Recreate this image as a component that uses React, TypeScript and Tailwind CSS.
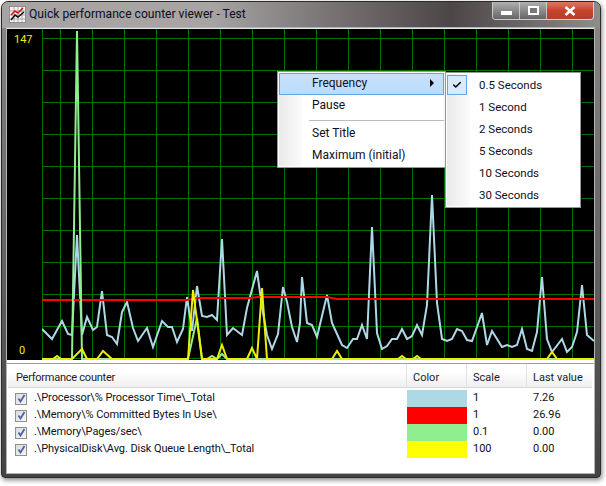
import { Check } from "lucide-react";

const gridX = [42, 60, 92, 124, 156, 188, 220, 252, 284, 316, 348, 380, 412, 444, 476, 508, 540, 572];
const gridY = [38, 70, 102, 134, 166, 198, 230, 262, 294, 326, 358];

const bluePts =
  "42,329 52,339 62,321 68,334 72,335 77,235 82,335 87,317 93,330 97,327 102,291 107,335 112,337 117,344 122,312 127,302 133,328 138,341 147,328 153,347 162,321 168,327 172,327 177,342 183,329 187,297 192,331 197,286 202,316 207,317 212,315 217,320 222,239 227,335 233,328 242,335 247,308 257,271 262,307 267,335 272,349 278,334 283,287 287,302 292,327 297,342 300,323 302,277 307,323 312,325 317,337 327,295 332,323 342,345 347,348 353,339 357,339 362,325 367,339 372,227 377,333 382,349 387,346 392,339 397,339 402,329 407,339 412,336 417,325 422,335 427,305 432,195 437,303 442,339 447,341 452,339 457,329 462,331 467,340 472,341 482,313 487,345 492,331 502,347 507,345 512,347 517,345 522,329 527,349 532,351 537,332 542,277 547,339 552,352 562,339 567,352 572,347 577,332 582,285 587,335 594,341";
const redPts = "42,300 187,300 197,298 250,298 258,297 327,297 337,299 594,299";
const greenPts = "42,359 72,359 77,31 82,359 188,359 197,318 202,359 207,359 212,356 217,359 222,354 227,359 594,359";
const yellowPts =
  "42,359 53,359 57,356 61,359 72,359 82,349 87,359 97,359 103,351 112,359 178,359 188,359 193,290 202,359 217,359 222,345 227,359 247,359 252,348 257,359 262,288 267,359 332,359 337,351 342,359 398,359 402,356 406,359 413,359 417,356 421,359 547,359 552,352 557,359 594,359";

const counters = [
  { name: ".\\Processor\\% Processor Time\\_Total", color: "bg-[#add8e6]", scale: "1", last: "7.26" },
  { name: ".\\Memory\\% Committed Bytes In Use\\", color: "bg-[#ff0000]", scale: "1", last: "26.96" },
  { name: ".\\Memory\\Pages/sec\\", color: "bg-[#90ee90]", scale: "0.1", last: "0.00" },
  { name: ".\\PhysicalDisk\\Avg. Disk Queue Length\\_Total", color: "bg-[#ffff00]", scale: "100", last: "0.00" },
];

const freqs = ["1 Second", "2 Seconds", "5 Seconds", "10 Seconds", "30 Seconds"];

const AppIcon = () => (
  <svg width="17" height="17" viewBox="0 0 17 17" className="shrink-0">
    <rect x="0.5" y="0.5" width="16" height="16" fill="#f4f4f4" stroke="#555" strokeDasharray="1 1" />
    <path d="M1 5H16M1 9H16M1 13H16M5 1V16M9 1V16M13 1V16" stroke="#aaa" strokeWidth="1" />
    <path d="M2 9L6 5L9 7L14 2" stroke="#e01010" strokeWidth="1.6" fill="none" />
    <path d="M2 14L6 9L9 11L15 6" stroke="#111" strokeWidth="1.6" fill="none" />
  </svg>
);

const Chart = () => (
  <svg width="552" height="331" viewBox="42 29 552 331" className="block shrink-0">
    {gridX.map((x) => (
      <line key={x} x1={x + 0.5} y1="29" x2={x + 0.5} y2="359" stroke="#007400" />
    ))}
    {gridY.map((y) => (
      <line key={y} x1="42" y1={y + 0.5} x2="594" y2={y + 0.5} stroke="#007400" />
    ))}
    <polyline points={bluePts} fill="none" stroke="#add8e6" strokeWidth="2" />
    <polyline points={redPts} fill="none" stroke="#ff0000" strokeWidth="2" />
    <polyline points={greenPts} fill="none" stroke="#90ee90" strokeWidth="2" />
    <polyline points={yellowPts} fill="none" stroke="#eeee00" strokeWidth="2" />
  </svg>
);

const Checkbox = () => (
  <span className="w-[12px] h-[12px] shrink-0 border border-[#8e8f8f] bg-gradient-to-br from-[#dcdcdc] to-[#f6f6f6] flex items-center justify-center">
    <svg width="9" height="9" viewBox="0 0 9 9">
      <path d="M1.5 4.5L3.5 7.5L7.5 1" stroke="#4a62a8" strokeWidth="1.8" fill="none" />
    </svg>
  </span>
);

const Row = ({ c }: { c: (typeof counters)[number] }) => (
  <div className="flex h-[17px] items-center">
    <div className="w-[399px] flex items-center gap-[7px] pl-[7px] whitespace-nowrap tracking-[-0.08px]">
      <Checkbox />
      <span>{c.name}</span>
    </div>
    <div className={`w-[60px] h-full ${c.color}`} />
    <div className="w-[60px] pl-[6px]">{c.scale}</div>
    <div className="pl-[6px]">{c.last}</div>
  </div>
);

export default function App() {
  return (
    <div
      className="w-[606px] h-[486px] bg-white pt-[1px] pl-[1px] text-[12px] text-[#101020] overflow-hidden"
      style={{ fontFamily: "Roboto, sans-serif" }}
    >
      <div className="relative w-[600px] h-[477px] rounded-t-[7px] rounded-b-[4px] border border-[#2a2a2a] bg-gradient-to-b from-[#8c8888] to-[#434343] shadow-[1px_2px_5px_rgba(0,0,0,0.5)] px-[5px] pb-[4px] flex flex-col">
        {/* title bar */}
        <div className="h-[26px] shrink-0 -mx-[5px] px-[5px] rounded-t-[6px] bg-gradient-to-r from-[#a8a4a4] from-[35%] via-[#4c4646] via-[75%] to-[#908c8c] flex items-start justify-between">
          <div className="h-[22px] mt-[1px] flex items-center gap-[3px] pl-[2px] pr-[2px] text-[#0c0c20] text-[12.1px] whitespace-nowrap">
            <AppIcon />
            <span>Quick performance counter viewer - Test</span>
          </div>
          <div className="flex h-[18px] border border-t-0 border-[#e8e8e8]/80 rounded-b-[4px] overflow-hidden mr-[1px]">
            <div className="w-[27px] flex items-center justify-center border-r border-[#e0e0e0]/70 bg-gradient-to-b from-[#b0b0b0] via-[#8a8a8a] to-[#666]">
              <div className="w-[11px] h-[4px] bg-white mt-[4px]" />
            </div>
            <div className="w-[27px] flex items-center justify-center border-r border-[#e0e0e0]/70 bg-gradient-to-b from-[#b0b0b0] via-[#8a8a8a] to-[#666]">
              <div className="w-[11px] h-[9px] bg-[#777] border-2 border-white" />
            </div>
            <div className="w-[46px] flex items-center justify-center bg-gradient-to-b from-[#d87a60] via-[#c8432a] to-[#b0402c]">
              <svg width="12" height="10" viewBox="0 0 12 10">
                <path d="M1.5 1L10.5 9M10.5 1L1.5 9" stroke="#fff" strokeWidth="2.6" />
              </svg>
            </div>
          </div>
        </div>

        {/* client area */}
        <div className="relative flex-1 min-h-0 border-t border-[#e4e4e4] shadow-[0_0_0_1px_#b4b4b4] flex flex-col w-[587px] bg-white">
          <div className="flex bg-black h-[331px] shrink-0 text-[#eeee00] text-[11px]">
            <div className="w-[35px] flex flex-col justify-between shrink-0 pt-[3px] pb-[1px]">
              <span className="pl-[7px]">147</span>
              <span className="pl-[12px]">0</span>
            </div>
            <Chart />
          </div>

          <div className="flex-1 min-h-0 mt-[3px] border-t border-[#a0a0a0] pl-[1px] text-[11px]">
            <div className="flex h-[24px] w-[584px] border-b border-[#d8d8d8] bg-gradient-to-b from-white from-[35%] to-[#efefef] text-[#1a1a2a]">
              <div className="w-[399px] pl-[8px] pt-[6px] border-r border-[#e2e2e2] tracking-[-0.25px]">Performance counter</div>
              <div className="w-[60px] pl-[6px] pt-[6px] border-r border-[#e2e2e2]">Color</div>
              <div className="w-[60px] pl-[6px] pt-[6px] border-r border-[#e2e2e2]">Scale</div>
              <div className="pl-[6px] pt-[6px]">Last value</div>
            </div>
            <div className="pt-[2px]">
              {counters.map((c) => (
                <Row key={c.name} c={c} />
              ))}
            </div>
          </div>
        </div>

        {/* context menu */}
        <div className="absolute left-[275px] top-[69px] w-[169px] h-[97px] border border-[#979797] bg-white p-[1px] text-[#101020] shadow-[1px_1px_3px_rgba(0,0,0,0.3)]">
          <div className="absolute left-[1px] top-[1px] bottom-[1px] w-[23px] bg-gradient-to-r from-[#eaeaea] to-[#fbfbfb]" />
          <div className="relative flex items-center h-[22px] pl-[32px] pr-[9px] pb-[2px] justify-between border border-[#62a5e8] bg-gradient-to-b from-[#c6e1fc] to-[#bddcfa]">
            <span>Frequency</span>
            <span className="w-0 h-0 border-y-[4px] border-y-transparent border-l-[4px] border-l-black" />
          </div>
          <div className="relative h-[22px] pl-[33px] pb-[2px] flex items-center">Pause</div>
          <div className="relative h-[6px] ml-[30px] flex items-center">
            <div className="h-[1px] w-full bg-[#bcbcbc]" />
          </div>
          <div className="relative h-[22px] pl-[33px] pb-[2px] flex items-center">Set Title</div>
          <div className="relative h-[22px] pl-[33px] pb-[2px] flex items-center">Maximum (initial)</div>
        </div>

        {/* frequency submenu */}
        <div className="absolute left-[443px] top-[70px] w-[136px] h-[136px] border border-[#979797] bg-white pt-[2px] px-[1px] text-[#101020] text-[11.5px] shadow-[1px_1px_3px_rgba(0,0,0,0.3)]">
          <div className="absolute left-[1px] top-[1px] bottom-[1px] w-[23px] bg-gradient-to-r from-[#eaeaea] to-[#fbfbfb]" />
          <div className="relative h-[22px] flex items-center pl-[32px]">
            <span className="absolute left-0 top-0 w-[20px] h-[20px] border border-[#62a5e8] bg-[#d8eafc] flex items-center justify-center">
              <Check size={10} strokeWidth={3.5} className="text-black" />
            </span>
            0.5 Seconds
          </div>
          {freqs.map((f) => (
            <div key={f} className="relative h-[22px] flex items-center pl-[32px]">
              {f}
            </div>
          ))}
        </div>
      </div>
    </div>
  );
}
